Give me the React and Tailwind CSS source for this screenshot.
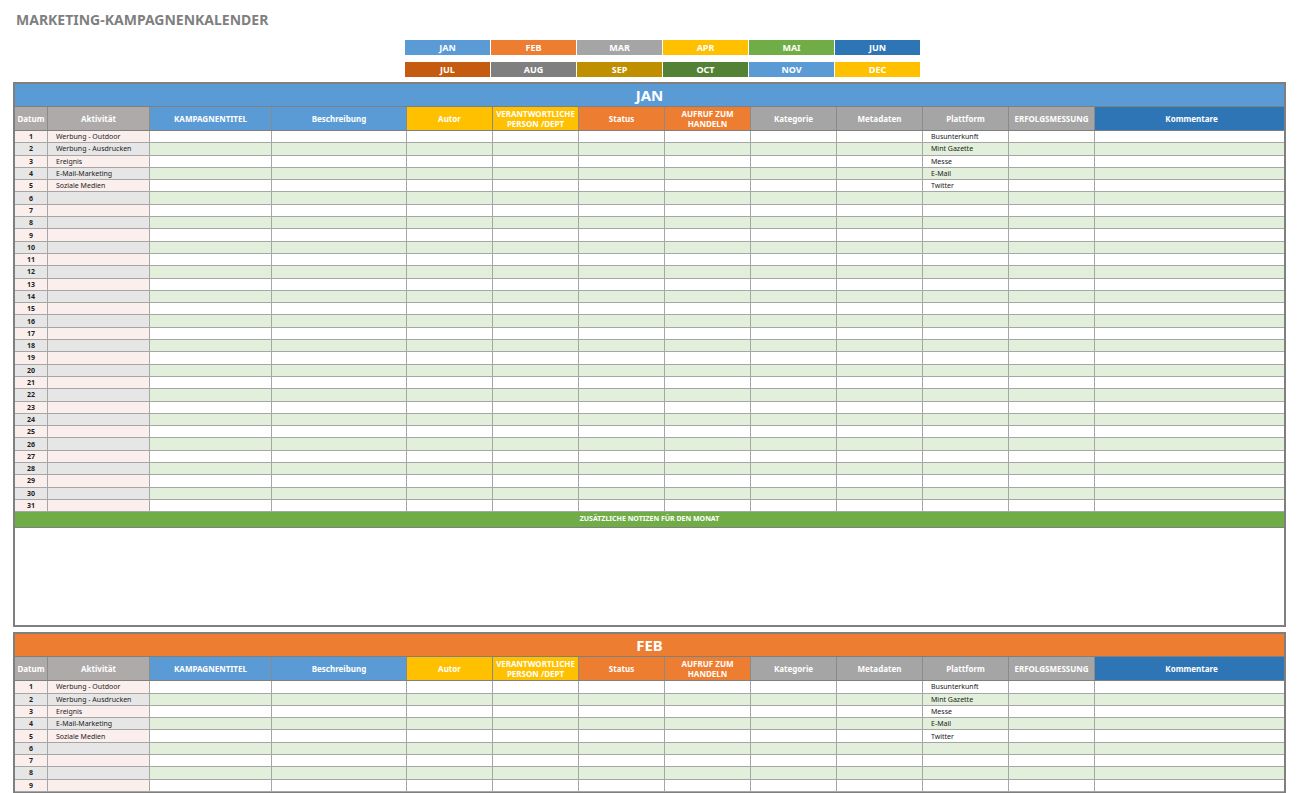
import React from "react";

const cols = [
  { w: 33, label: "Datum", bg: "bg-[#aeaaaa]" },
  { w: 102, label: "Aktivität", bg: "bg-[#aeaaaa]" },
  { w: 122, label: "KAMPAGNENTITEL", bg: "bg-[#5b9bd5]" },
  { w: 135, label: "Beschreibung", bg: "bg-[#5b9bd5]" },
  { w: 86, label: "Autor", bg: "bg-[#ffc000]" },
  { w: 86, label: "VERANTWORTLICHE PERSON /DEPT", bg: "bg-[#ffc000]" },
  { w: 86, label: "Status", bg: "bg-[#ed7d31]" },
  { w: 86, label: "AUFRUF ZUM HANDELN", bg: "bg-[#ed7d31]" },
  { w: 86, label: "Kategorie", bg: "bg-[#a5a5a5]" },
  { w: 86, label: "Metadaten", bg: "bg-[#a5a5a5]" },
  { w: 86, label: "Plattform", bg: "bg-[#a5a5a5]" },
  { w: 86, label: "ERFOLGSMESSUNG", bg: "bg-[#a5a5a5]" },
  { w: 193, label: "Kommentare", bg: "bg-[#2e75b6]" },
];
const act = ["Werbung - Outdoor", "Werbung - Ausdrucken", "Ereignis", "E-Mail-Marketing", "Soziale Medien"];
const plat = ["Busunterkunft", "Mint Gazette", "Messe", "E-Mail", "Twitter"];

const months1 = [
  ["JAN", "bg-[#5b9bd5]"], ["FEB", "bg-[#ed7d31]"], ["MAR", "bg-[#a5a5a5]"],
  ["APR", "bg-[#ffc000]"], ["MAI", "bg-[#70ad47]"], ["JUN", "bg-[#2e75b6]"],
];
const months2 = [
  ["JUL", "bg-[#c55a11]"], ["AUG", "bg-[#7f7f7f]"], ["SEP", "bg-[#bf8f00]"],
  ["OCT", "bg-[#548235]"], ["NOV", "bg-[#5b9bd5]"], ["DEC", "bg-[#ffc000]"],
];

function Row({ i }) {
  const even = i % 2 === 0;
  return (
    <div className="flex h-[12.3px] border-b border-[#a6a6a6]">
      {cols.map((c, k) => {
        let bg = even ? "bg-[#e2efda]" : "bg-white";
        if (k < 2) bg = even ? "bg-[#e7e6e6]" : "bg-[#fbefee]";
        let content = null;
        if (k === 0) content = <span className="font-bold w-full text-center">{i}</span>;
        if (k === 1 && i <= 5) content = <span className="pl-2">{act[i - 1]}</span>;
        if (k === 10 && i <= 5) content = <span className="pl-2">{plat[i - 1]}</span>;
        return (
          <div key={k} style={{ width: c.w }} className={`${bg} flex items-center shrink-0 border-r border-[#a6a6a6] last:border-r-0 text-[7px] leading-none text-[#222]`}>
            {content}
          </div>
        );
      })}
    </div>
  );
}

function Block({ name, color, rows }) {
  return (
    <div className="border-2 border-[#7f7f7f] w-[1273px] overflow-hidden">
      <div className={`${color} h-[23px] flex items-center justify-center text-white font-bold text-[15px] border-b border-[#7f7f7f]`}>{name}</div>
      <div className="flex h-[24px] border-b border-[#7f7f7f]">
        {cols.map((c, k) => (
          <div key={k} style={{ width: c.w }} className={`${c.bg} shrink-0 flex items-center justify-center text-center text-white font-bold text-[8px] leading-[10px] border-r border-[#8a8a8a] last:border-r-0 px-1`}>
            {c.label}
          </div>
        ))}
      </div>
      {Array.from({ length: rows }, (_, i) => <Row key={i} i={i + 1} />)}
      {rows === 31 && (
        <>
          <div className="bg-[#70ad47] h-[16px] flex items-center justify-center text-white font-bold text-[7px] border-b border-[#7f7f7f]">ZUSÄTZLICHE NOTIZEN FÜR DEN MONAT</div>
          <div className="h-[97px] bg-white" />
        </>
      )}
    </div>
  );
}

export default function App() {
  return (
    <div className="w-[1300px] h-[793px] overflow-hidden bg-white font-['Liberation_Sans',Arial,sans-serif]">
      <div className="pl-[16px] pt-[9px] h-[40px] text-[14px] font-bold text-[#7f7f7f]">MARKETING-KAMPAGNENKALENDER</div>
      <div className="pl-[405px] flex flex-col gap-[7px]">
        {[months1, months2].map((m, r) => (
          <div key={r} className="flex gap-[1px]">
            {m.map(([n, bg]) => (
              <div key={n} className={`${bg} w-[85px] h-[15px] flex items-center justify-center text-white font-bold text-[9px]`}>{n}</div>
            ))}
          </div>
        ))}
      </div>
      <div className="pl-[13px] pt-[5px] flex flex-col gap-[5px]">
        <Block name="JAN" color="bg-[#5b9bd5]" rows={31} />
        <Block name="FEB" color="bg-[#ed7d31]" rows={9} />
      </div>
    </div>
  );
}
